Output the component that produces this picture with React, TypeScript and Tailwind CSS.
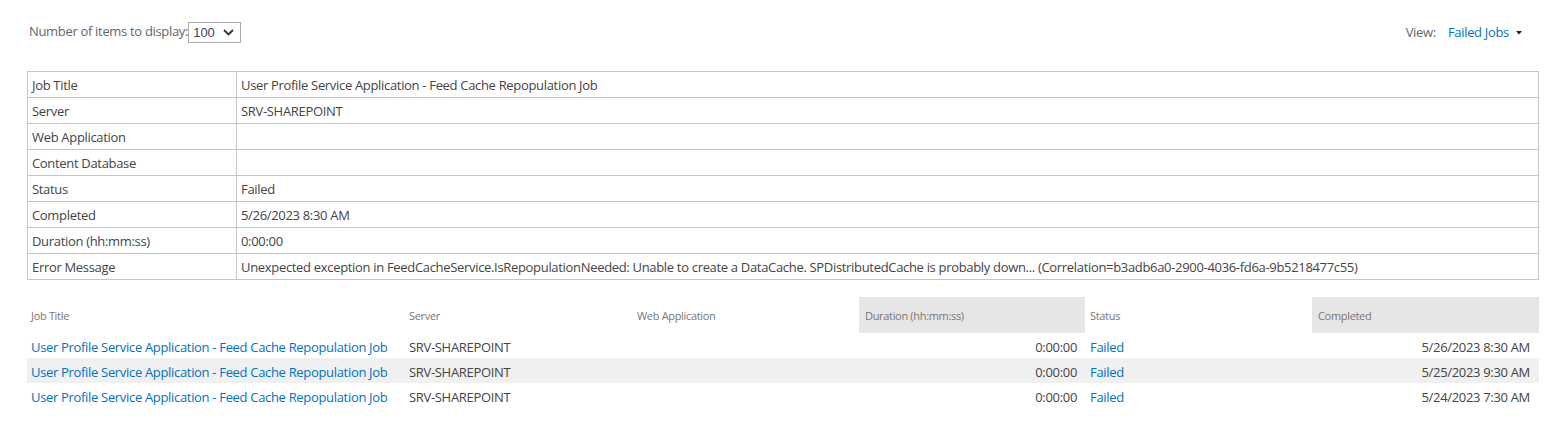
import React from "react";

const font = { fontFamily: '"Open Sans", "Segoe UI", sans-serif' };

const details: [string, string][] = [
  ["Job Title", "User Profile Service Application - Feed Cache Repopulation Job"],
  ["Server", "SRV-SHAREPOINT"],
  ["Web Application", ""],
  ["Content Database", ""],
  ["Status", "Failed"],
  ["Completed", "5/26/2023 8:30 AM"],
  ["Duration (hh:mm:ss)", "0:00:00"],
  [
    "Error Message",
    "Unexpected exception in FeedCacheService.IsRepopulationNeeded: Unable to create a DataCache. SPDistributedCache is probably down... (Correlation=b3adb6a0-2900-4036-fd6a-9b5218477c55)",
  ],
];

const jobs = [
  { completed: "5/26/2023 8:30 AM" },
  { completed: "5/25/2023 9:30 AM" },
  { completed: "5/24/2023 7:30 AM" },
];

const jobTitle = "User Profile Service Application - Feed Cache Repopulation Job";

export default function App() {
  return (
    <div className="w-[1549px] h-[421px] bg-white text-[#444] text-[13px] tracking-[-0.32px]" style={font}>
      {/* toolbar */}
      <div className="flex items-center justify-between pl-[29px] pr-[27px] pt-[21px] h-[43px]">
        <div className="flex items-center text-[#666]">
          <span>Number of items to display:</span>
          <div
            className="flex items-center justify-between w-[53px] h-[21px] border border-[#ababab] pl-[4px] pr-[6px] text-[#444] tracking-normal"
            style={{ fontFamily: '"Liberation Sans", Arial, sans-serif' }}
          >
            <span className="text-[13px] mt-[2px]">100</span>
            <svg width="11" height="7" viewBox="0 0 11 7">
              <path d="M1 1l4.5 4.5L10 1" fill="none" stroke="#333" strokeWidth="1.8" />
            </svg>
          </div>
        </div>
        <div className="flex items-center mt-[1px]">
          <span className="text-[#666]">View:</span>
          <span className="ml-[12px] text-[#0072c6]">Failed Jobs</span>
          <svg className="ml-[7px]" width="6" height="4" viewBox="0 0 6 4">
            <path d="M0 0h6L3 3.5z" fill="#222" />
          </svg>
        </div>
      </div>

      {/* job details */}
      <div className="pl-[27px] pr-[10px] mt-[28px]">
        <table className="w-[1512px] border-collapse">
          <tbody>
            {details.map(([k, v]) => (
              <tr key={k} className="h-[26px]">
                <td className="w-[209px] border border-[#c6c6c6] pl-[4px] pt-[2px] pb-0 align-middle">{k}</td>
                <td className="border border-[#c6c6c6] pl-[4px] pt-[2px] pb-0 align-middle whitespace-nowrap">{v}</td>
              </tr>
            ))}
          </tbody>
        </table>
      </div>

      {/* job list */}
      <div className="pl-[27px] mt-[17px]">
        <table className="w-[1512px] border-collapse">
          <thead>
            <tr className="h-[36px] text-[11px] text-[#777] font-normal">
              <th className="w-[378px] text-left font-normal pl-[4px] pt-[3px]">Job Title</th>
              <th className="w-[228px] text-left font-normal pl-[4px] pt-[3px]">Server</th>
              <th className="w-[226px] text-left font-normal pl-[4px] pt-[3px]">Web Application</th>
              <th className="w-[226px] text-left font-normal pl-[6px] pt-[3px] bg-[#e6e6e6]">Duration (hh:mm:ss)</th>
              <th className="w-[227px] text-left font-normal pl-[5px] pt-[3px]">Status</th>
              <th className="w-[227px] text-left font-normal pl-[6px] pt-[3px] bg-[#e6e6e6]">Completed</th>
            </tr>
          </thead>
          <tbody>
            {jobs.map((j, i) => (
              <tr key={j.completed} className={i === 1 ? "h-[25px] bg-[#f0f0f0]" : "h-[25px]"}>
                <td className="pl-[4px] pt-[4px] text-[#0072c6] whitespace-nowrap">{jobTitle}</td>
                <td className="pl-[4px] pt-[4px]">SRV-SHAREPOINT</td>
                <td className="pl-[4px] pt-[4px]"></td>
                <td className="pr-[8px] pt-[4px] text-right">0:00:00</td>
                <td className="pl-[5px] pt-[4px] text-[#0072c6]">Failed</td>
                <td className="pr-[9px] pt-[4px] text-right">{j.completed}</td>
              </tr>
            ))}
          </tbody>
        </table>
      </div>
    </div>
  );
}
